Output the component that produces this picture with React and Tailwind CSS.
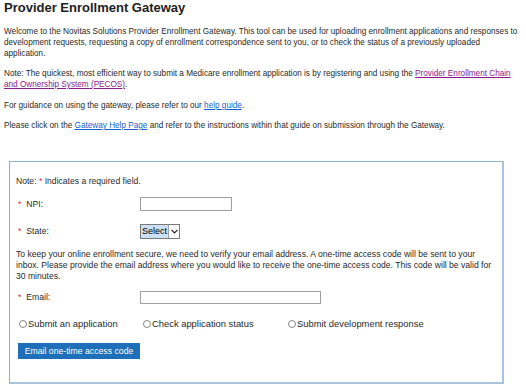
import { useState } from "react";

const ACTIONS = ["Submit an application", "Check application status", "Submit development response"];

function Req() {
  return <span className="text-[#e0282d] mr-[5px]">*</span>;
}

export default function App() {
  const [action, setAction] = useState("");

  return (
    <div className="w-[526px] h-[391px] bg-white text-[#2a2a2a] text-[8.2px] leading-[11px] font-['Liberation_Sans',Arial,sans-serif] overflow-hidden">
      <div className="pl-[4px] pr-[2px]">
        <h1 className="text-[13px] leading-[16px] font-bold text-[#222]">Provider Enrollment Gateway</h1>

        <p className="mt-[10px]">
          Welcome to the Novitas Solutions Provider Enrollment Gateway. This tool can be used for uploading enrollment applications and responses to development requests, requesting a copy of enrollment correspondence sent to you, or to check the status of a previously uploaded<br />application.
        </p>
        <p className="mt-[9px]">
          Note: The quickest, most efficient way to submit a Medicare enrollment application is by registering and using the{" "}
          <a href="#" className="text-[#8b1a8f] underline">Provider Enrollment Chain and Ownership System (PECOS)</a>.
        </p>
        <p className="mt-[10px]">
          For guidance on using the gateway, please refer to our <a href="#" className="text-[#1a5fd0] underline">help guide</a>.
        </p>
        <p className="mt-[9px]">
          Please click on the <a href="#" className="text-[#1a5fd0] underline">Gateway Help Page</a> and refer to the instructions within that guide on submission through the Gateway.
        </p>
      </div>

      <div className="ml-[9px] mt-[30px] w-[495px] h-[223px] border border-[#8fb0cc] border-r-2 border-b-2 border-r-[#a9c4dc] border-b-[#a9c4dc] px-[6px] pt-[14px] text-[8.6px]">
        <p>Note: <span className="text-[#e0282d]">*</span> Indicates a required field.</p>

        <div className="flex items-center mt-[10px]">
          <label className="w-[124px] pl-[2px]"><Req />NPI:</label>
          <input className="w-[92px] h-[14px] border border-[#a0a0a0] bg-white" />
        </div>

        <div className="flex items-center mt-[13px]">
          <label className="w-[124px] pl-[2px]"><Req />State:</label>
          <div className="flex h-[15px] border border-[#7a7a7a] bg-white">
            <span className="bg-[#cce0f5] px-[1px] text-[9px] leading-[13px] text-black">Select</span>
            <span className="w-[11px] border-l border-[#a0a0a0] flex items-center justify-center">
              <svg width="7" height="5" viewBox="0 0 7 5"><path d="M0.5 0.8 L3.5 3.8 L6.5 0.8" fill="none" stroke="#222" strokeWidth="1.2" /></svg>
            </span>
          </div>
        </div>

        <p className="mt-[10px]">
          To keep your online enrollment secure, we need to verify your email address. A one-time access code will be sent to your inbox. Please provide the email address where you would like to receive the one-time access code. This code will be valid for 30 minutes.
        </p>

        <div className="flex items-center mt-[9px]">
          <label className="w-[124px] pl-[2px]"><Req />Email:</label>
          <input className="w-[181px] h-[13px] border border-[#a0a0a0] bg-white" />
        </div>

        <div className="flex items-center mt-[14px] pl-[3px]">
          {ACTIONS.map((a, i) => (
            <label key={a} className={"flex items-center text-[9.4px] " + (i === 0 ? "w-[124px]" : i === 1 ? "w-[145px]" : "")}>
              <span className={"w-[8px] h-[8px] rounded-full border border-[#888] mr-[1px] " + (action === a ? "bg-[#1c6fb8]" : "bg-white")} onClick={() => setAction(a)} />
              {a}
            </label>
          ))}
        </div>

        <button className="mt-[14px] ml-[2px] w-[122px] h-[16px] bg-[#1c6fb8] text-white text-[8.7px] leading-[16px] text-center">
          Email one-time access code
        </button>
      </div>
    </div>
  );
}
